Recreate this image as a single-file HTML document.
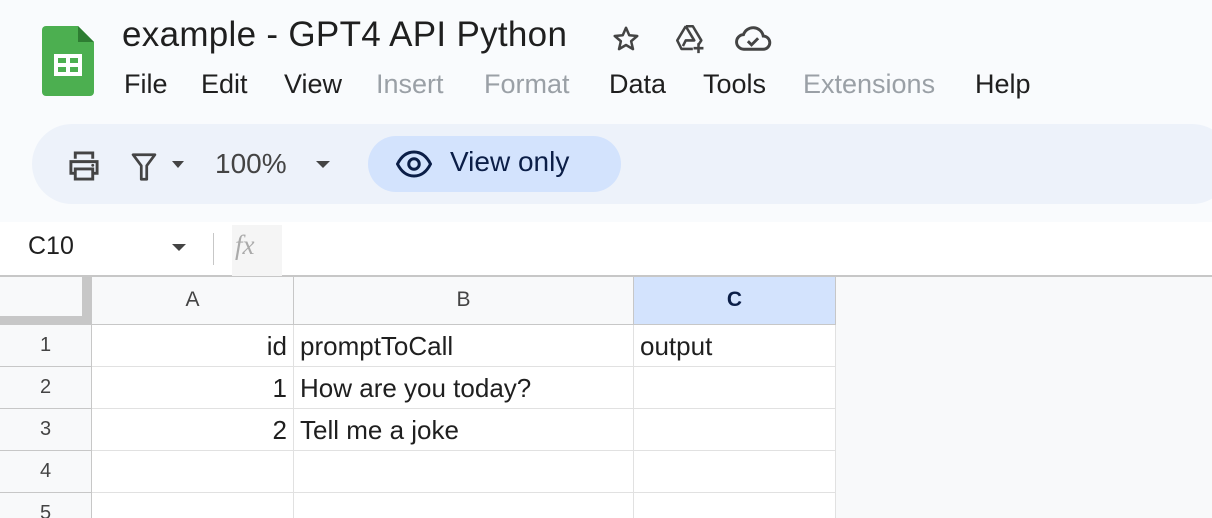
<!DOCTYPE html>
<html><head><style>
*{margin:0;padding:0;box-sizing:border-box}
html,body{width:1212px;height:518px;overflow:hidden}
body{background:#f9fbfd;font-family:"Liberation Sans",Arial,sans-serif;position:relative;color:#1f1f1f}
.a{position:absolute}
.menu span{position:absolute;top:69px;font-size:27px;white-space:nowrap}
.grid{position:absolute;left:0;top:277px;width:1212px;height:241px;background:#f8f9fa;overflow:hidden}
.cell{position:absolute;border-right:1px solid #e1e1e1;border-bottom:1px solid #e1e1e1;background:#fff;font-size:26px;line-height:43px;padding:0 6px;white-space:nowrap;overflow:hidden}
.rh{position:absolute;left:0;width:92px;background:#f8f9fa;border-right:1px solid #c7c7c7;border-bottom:1px solid #c7c7c7;text-align:center;font-size:20px;color:#444;line-height:41px}
.ch{position:absolute;top:0;height:48px;background:#f8f9fa;border-right:1px solid #c7c7c7;border-bottom:1px solid #c7c7c7;text-align:center;font-size:21px;color:#444;line-height:46px}
</style></head><body>
<svg class="a" style="left:42px;top:26px" width="52" height="70" viewBox="0 0 52 70">
<path d="M4 0H36L52 16V66a4 4 0 0 1-4 4H4a4 4 0 0 1-4-4V4a4 4 0 0 1 4-4z" fill="#4caf50"/>
<path d="M36 0V16H52z" fill="#2e7d32"/>
<rect x="12" y="28" width="28" height="22" fill="#fff"/>
<rect x="16" y="32" width="8" height="5" fill="#4caf50"/><rect x="28" y="32" width="8" height="5" fill="#4caf50"/>
<rect x="16" y="41" width="8" height="5" fill="#4caf50"/><rect x="28" y="41" width="8" height="5" fill="#4caf50"/>
</svg>
<div class="a" style="left:122px;top:15px;font-size:35px;white-space:nowrap;letter-spacing:0.3px">example - GPT4 API Python</div>
<svg class="a" style="left:610px;top:24px" width="32" height="30" viewBox="0 0 24 24"><path d="M12 3l2.6 6 6.4.6-4.9 4.2 1.5 6.3L12 16.8 6.4 20.1l1.5-6.3L3 9.6l6.4-.6z" fill="none" stroke="#444" stroke-width="2" stroke-linejoin="round"/></svg>
<svg class="a" style="left:672px;top:22px" width="36" height="34" viewBox="0 0 24 24"><path d="M9 3h5l6 10-2 3M9 3L3 13l3 6h8M9 3l6 10H9L7 17" fill="none" stroke="#444" stroke-width="1.8" stroke-linejoin="round"/><path d="M18 15v7M14.5 18.5h7" stroke="#444" stroke-width="1.8"/></svg>
<svg class="a" style="left:734px;top:24px" width="38" height="30" viewBox="0 0 26 20"><path d="M7 17a5 5 0 0 1-.5-10A7 7 0 0 1 20 8a4.5 4.5 0 0 1 0 9z" fill="none" stroke="#444" stroke-width="2"/><path d="M9.5 11.5l2.5 2.5 4.5-4.5" fill="none" stroke="#444" stroke-width="2"/></svg>
<div class="menu">
<span style="left:124px">File</span><span style="left:201px">Edit</span><span style="left:284px">View</span>
<span style="left:376px;color:#9aa0a6">Insert</span><span style="left:484px;color:#9aa0a6">Format</span>
<span style="left:609px">Data</span><span style="left:703px">Tools</span>
<span style="left:803px;color:#9aa0a6">Extensions</span><span style="left:975px">Help</span>
</div>
<div class="a" style="left:32px;top:124px;width:1200px;height:80px;background:#edf2fa;border-radius:40px"></div>
<svg class="a" style="left:66px;top:150px" width="36" height="32" viewBox="0 0 24 22"><path d="M6 6V2h12v4M6 16H3V8h18v8h-3M6 13h12v7H6z" fill="none" stroke="#444" stroke-width="2"/><circle cx="18" cy="10.5" r="1" fill="#444"/></svg>
<svg class="a" style="left:130px;top:152px" width="28" height="30" viewBox="0 0 20 22"><path d="M2 2h16l-6 8v10H8V10z" fill="none" stroke="#444" stroke-width="2" stroke-linejoin="round"/></svg>
<div class="a" style="left:172px;top:161px;border:6px solid transparent;border-top:7px solid #444;border-bottom:0"></div>
<div class="a" style="left:215px;top:148px;font-size:28px;color:#444">100%</div>
<div class="a" style="left:316px;top:161px;border:7px solid transparent;border-top:7px solid #444;border-bottom:0"></div>
<div class="a" style="left:368px;top:136px;width:253px;height:56px;background:#d3e3fd;border-radius:28px"></div>
<svg class="a" style="left:396px;top:150px" width="36" height="28" viewBox="0 0 24 18"><path d="M1 9C4 3 8 1 12 1s8 2 11 8c-3 6-7 8-11 8S4 15 1 9z" fill="none" stroke="#0b1e47" stroke-width="2"/><circle cx="12" cy="9" r="3.5" fill="none" stroke="#0b1e47" stroke-width="2"/></svg>
<div class="a" style="left:450px;top:146px;font-size:28px;color:#0b1e47">View only</div>
<div class="a" style="left:0;top:222px;width:1212px;height:55px;background:#fff;border-bottom:2px solid #c7c7c7"></div>
<div class="a" style="left:28px;top:232px;font-size:25px">C10</div>
<div class="a" style="left:172px;top:244px;border:7px solid transparent;border-top:7px solid #444;border-bottom:0"></div>
<div class="a" style="left:213px;top:233px;width:1px;height:32px;background:#c7c7c7"></div>
<div class="a" style="left:232px;top:225px;width:50px;height:51px;background:#f5f5f5"></div>
<div class="a" style="left:235px;top:230px;font-size:27px;font-style:italic;font-family:'Liberation Serif',serif;color:#aaa">fx</div>
<div class="grid">
<div class="a" style="left:0;top:0;width:92px;height:48px;background:#f8f9fa"></div>
<div class="a" style="left:0;top:39px;width:92px;height:9px;background:#c7c7c7"></div>
<div class="a" style="left:82px;top:0;width:10px;height:48px;background:#c7c7c7"></div>
<div class="ch" style="left:92px;width:202px">A</div>
<div class="ch" style="left:294px;width:340px">B</div>
<div class="ch" style="left:634px;width:202px;background:#d3e3fd;color:#0b1e47;font-weight:bold">C</div>
<div class="rh" style="top:48px;height:42px">1</div>
<div class="rh" style="top:90px;height:42px">2</div>
<div class="rh" style="top:132px;height:42px">3</div>
<div class="rh" style="top:174px;height:42px">4</div>
<div class="rh" style="top:216px;height:42px">5</div>
<div class="cell" style="left:92px;top:48px;width:202px;height:42px;text-align:right">id</div>
<div class="cell" style="left:294px;top:48px;width:340px;height:42px">promptToCall</div>
<div class="cell" style="left:634px;top:48px;width:202px;height:42px">output</div>
<div class="cell" style="left:92px;top:90px;width:202px;height:42px;text-align:right">1</div>
<div class="cell" style="left:294px;top:90px;width:340px;height:42px">How are you today?</div>
<div class="cell" style="left:634px;top:90px;width:202px;height:42px"></div>
<div class="cell" style="left:92px;top:132px;width:202px;height:42px;text-align:right">2</div>
<div class="cell" style="left:294px;top:132px;width:340px;height:42px">Tell me a joke</div>
<div class="cell" style="left:634px;top:132px;width:202px;height:42px"></div>
<div class="cell" style="left:92px;top:174px;width:202px;height:42px"></div>
<div class="cell" style="left:294px;top:174px;width:340px;height:42px"></div>
<div class="cell" style="left:634px;top:174px;width:202px;height:42px"></div>
<div class="cell" style="left:92px;top:216px;width:202px;height:42px"></div>
<div class="cell" style="left:294px;top:216px;width:340px;height:42px"></div>
<div class="cell" style="left:634px;top:216px;width:202px;height:42px"></div>
</div>
</body></html>
